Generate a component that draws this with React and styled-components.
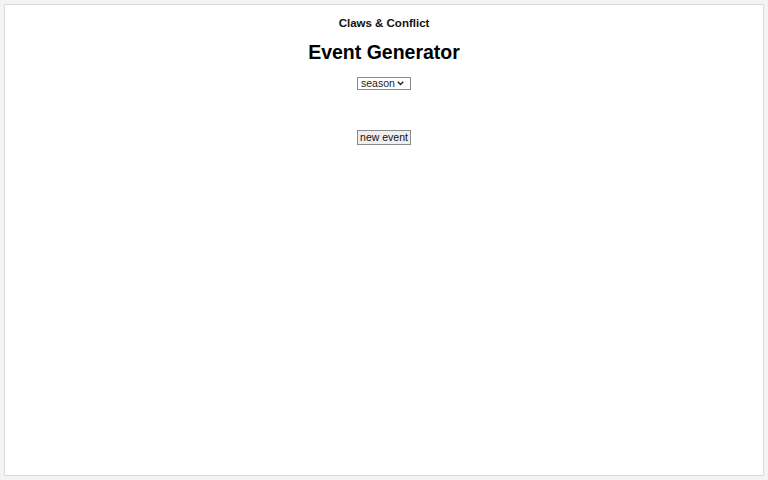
import React, { useState } from 'react';
import styled, { createGlobalStyle } from 'styled-components';

const GlobalStyles = createGlobalStyle`
  html, body {
    margin: 0;
    height: 100%;
    background: #f3f3f3;
  }
  body {
    font-family: 'Liberation Sans', Arial, sans-serif;
  }
  #root {
    height: 100%;
  }
`;

const Page = styled.div`
  box-sizing: border-box;
  height: 100%;
  padding: 4px;
`;

const Panel = styled.main`
  box-sizing: border-box;
  height: 100%;
  background: white;
  border: 1px solid #dcdcdc;
  display: flex;
  flex-direction: column;
  align-items: center;
  padding-top: 11px;
`;

const Brand = styled.div`
  font-size: 11.5px;
  font-weight: bold;
  color: #111;
  line-height: 14px;
`;

const Heading = styled.h1`
  font-size: 19.5px;
  font-weight: bold;
  margin: 11px 0 0;
  line-height: 22px;
  color: #000;
`;

const SelectWrap = styled.div`
  position: relative;
  margin-top: 14px;
  width: 54px;
  height: 13px;
`;

const SeasonSelect = styled.select`
  appearance: none;
  -webkit-appearance: none;
  box-sizing: border-box;
  display: block;
  width: 100%;
  height: 100%;
  margin: 0;
  padding: 0 0 0 3px;
  font-family: 'Liberation Sans', Arial, sans-serif;
  font-size: 10.5px;
  line-height: 11px;
  border: 1px solid #8a8a8a;
  border-radius: 0;
  background: white;
  color: #222;
  outline: none;
`;

const Chevron = styled.svg`
  position: absolute;
  right: 7px;
  top: 4px;
  width: 7px;
  height: 5px;
  pointer-events: none;
`;

const GenerateButton = styled.button`
  box-sizing: border-box;
  margin-top: 40px;
  width: 54px;
  height: 15px;
  padding: 0;
  font-family: 'Liberation Sans', Arial, sans-serif;
  font-size: 10.5px;
  line-height: 13px;
  border: 1px solid #8a8a8a;
  border-radius: 0;
  background: #efefef;
  color: #111;
`;

const Result = styled.p`
  font-size: 13px;
  margin: 12px 0 0;
`;

export default function App() {
  const [season, setSeason] = useState('');
  const [event, setEvent] = useState('');

  return (
    <Page>
      <GlobalStyles />
      <Panel>
        <Brand>Claws &amp; Conflict</Brand>
        <Heading>Event Generator</Heading>
        <SelectWrap>
          <SeasonSelect value={season} onChange={e => setSeason(e.target.value)}>
            <option value="">season</option>
            <option value="spring">spring</option>
            <option value="summer">summer</option>
            <option value="autumn">autumn</option>
            <option value="winter">winter</option>
          </SeasonSelect>
          <Chevron viewBox="0 0 7 5">
            <path d="M0.8 0.8 L3.5 3.6 L6.2 0.8" fill="none" stroke="#222" strokeWidth="1.4" />
          </Chevron>
        </SelectWrap>
        <GenerateButton onClick={() => setEvent(season ? `A ${season} event` : '')}>
          new event
        </GenerateButton>
        {event && <Result>{event}</Result>}
      </Panel>
    </Page>
  );
}
